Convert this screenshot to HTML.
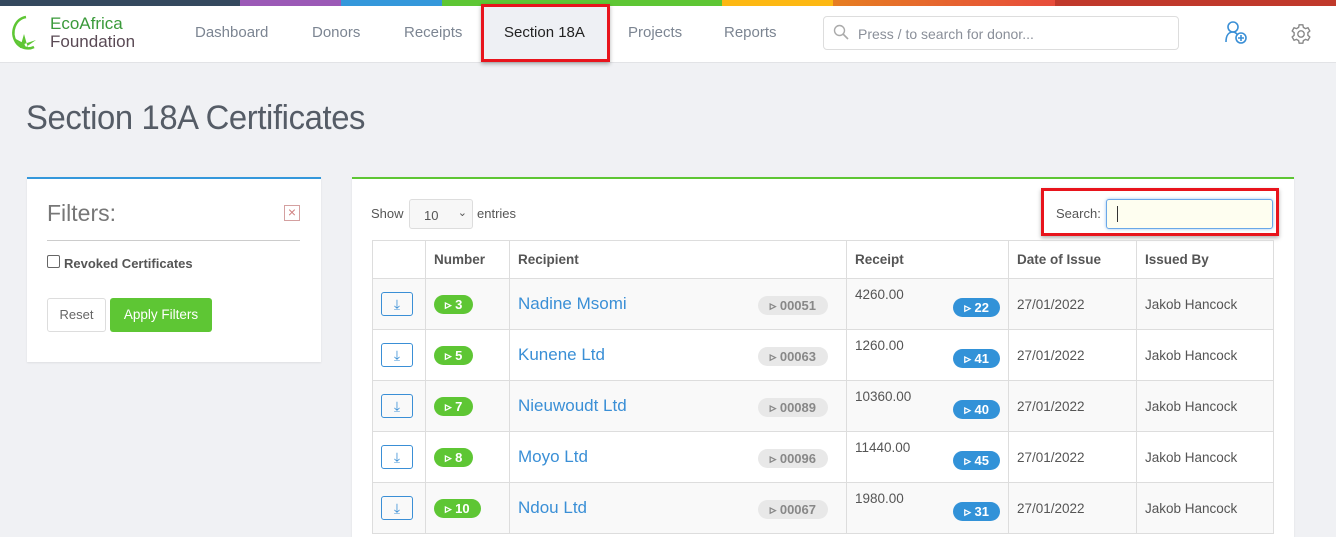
<!DOCTYPE html>
<html><head><meta charset="utf-8"><style>
*{box-sizing:border-box;margin:0;padding:0}
body{width:1336px;height:530px;overflow:hidden;background:#f0f1f4;font-family:"Liberation Sans",sans-serif;position:relative}
.stripe{position:absolute;top:0;height:6px}
.hdr{position:absolute;top:6px;left:0;width:1336px;height:57px;background:#fff;border-bottom:1px solid #e2e3e6}
.nav{position:absolute;top:24px;font-size:15px;color:#7c8592}
.abs{position:absolute}
.card{position:absolute;background:#fff;box-shadow:0 1px 2px rgba(0,0,0,.08)}
table{position:absolute;left:372px;top:240px;border-collapse:collapse;font-size:13.5px;color:#555}
td,th{border:1px solid #ddd;padding:0 8px;text-align:left;vertical-align:middle}
th{height:38px;font-weight:bold;color:#555}
td{height:51px}
tr.g td{background:#f9f9f9}
.pill{display:inline-block;border-radius:10px;color:#fff;font-weight:bold;font-size:13px;height:19px;line-height:19px;padding:0 11px}
.gr{background:#5ec634}.bl{background:#3292d8}.gy{background:#e8e8e8;color:#888;padding:0 12px}
.dl{display:inline-block;width:32px;height:24px;border:1px solid #3a8fd6;border-radius:3px;color:#3a8fd6;text-align:center;font-size:14px;line-height:22px}
.name{color:#3a8fd6;font-size:17px}
</style></head><body>
<div class="stripe" style="left:0;width:240px;background:#34495e"></div>
<div class="stripe" style="left:240px;width:101px;background:#9b59b6"></div>
<div class="stripe" style="left:341px;width:101px;background:#3498db"></div>
<div class="stripe" style="left:442px;width:280px;background:#5ec634"></div>
<div class="stripe" style="left:722px;width:111px;background:#fdb813"></div>
<div class="stripe" style="left:833px;width:222px;background:linear-gradient(90deg,#e67e22,#e74c3c)"></div>
<div class="stripe" style="left:1055px;width:281px;background:#c0392b"></div>
<div class="hdr"></div>
<svg class="abs" style="left:10px;top:14px" width="30" height="38" viewBox="0 0 30 38"><path d="M16 3 C5 5 0 18 6 28 C10 34 18 36 24 33" fill="none" stroke="#5ec634" stroke-width="2.5"/><path d="M10 34 L14 20 L18 34 Z M12 33 L4 24 L15 30 Z M16 33 L26 26 L14 30 Z" fill="#5ec634"/></svg>
<div class="abs" style="left:50px;top:15px;font-size:17px;color:#3a9a3a;line-height:18px">EcoAfrica</div>
<div class="abs" style="left:50px;top:33px;font-size:17px;color:#5a4a55;line-height:18px">Foundation</div>
<div class="nav" style="left:195px">Dashboard</div>
<div class="nav" style="left:312px">Donors</div>
<div class="nav" style="left:404px">Receipts</div>
<div class="abs" style="left:481px;top:4px;width:129px;height:58px;background:#eef0f4;border:3px solid #e8141c;box-shadow:0 2px 4px rgba(0,0,0,.3)"></div>
<div class="nav" style="left:504px;color:#222">Section 18A</div>
<div class="nav" style="left:628px">Projects</div>
<div class="nav" style="left:724px">Reports</div>
<div class="abs" style="left:823px;top:16px;width:356px;height:34px;border:1px solid #ddd;border-radius:4px;background:#fff"></div>
<svg class="abs" style="left:833px;top:24px" width="16" height="16"><circle cx="6.5" cy="6.5" r="5" fill="none" stroke="#aaa" stroke-width="1.4"/><path d="M10 10 L15 15" stroke="#aaa" stroke-width="1.6"/></svg>
<div class="abs" style="left:858px;top:26px;font-size:14px;color:#8a8f99">Press / to search for donor...</div>
<svg class="abs" style="left:1224px;top:20px" width="26" height="26" viewBox="0 0 26 26" fill="none" stroke="#3a8fd6" stroke-width="1.6"><circle cx="9" cy="7" r="5"/><path d="M2 22 C2 15 5 12 9 12 C11 12 12 13 13 14"/><circle cx="17" cy="18" r="5"/><path d="M17 15 V21 M14 18 H20"/></svg>
<svg class="abs" style="left:1290px;top:23px" width="22" height="22" viewBox="0 0 24 24" fill="none" stroke="#888" stroke-width="1.5"><circle cx="12" cy="12" r="3.5"/><path d="M10 2h4l.6 2.8 2.3 1.3 2.7-.9 2 3.5-2.1 1.9v2.8l2.1 1.9-2 3.5-2.7-.9-2.3 1.3L14 22h-4l-.6-2.8-2.3-1.3-2.7.9-2-3.5 2.1-1.9v-2.8L2.4 8.7l2-3.5 2.7.9 2.3-1.3z"/></svg>
<div class="abs" style="left:26px;top:99px;font-size:34px;color:#555c66;letter-spacing:-0.4px;transform:scaleX(0.965);transform-origin:left">Section 18A Certificates</div>
<div class="card" style="left:27px;top:177px;width:294px;height:185px;border-top:2px solid #3498db"></div>
<div class="abs" style="left:47px;top:200px;font-size:23px;color:#777">Filters:</div>
<div class="abs" style="left:284px;top:205px;width:16px;height:16px;border:1px solid #d4a0a0;color:#d08080;font-size:14px;line-height:13px;text-align:center">×</div>
<div class="abs" style="left:47px;top:240px;width:253px;height:1px;background:#ccc"></div>
<div class="abs" style="left:47px;top:255px;width:13px;height:13px;border:1px solid #666;border-radius:2px"></div>
<div class="abs" style="left:64px;top:256px;font-size:13px;font-weight:bold;color:#555">Revoked Certificates</div>
<div class="abs" style="left:47px;top:298px;width:59px;height:34px;border:1px solid #ddd;border-radius:3px;font-size:13px;color:#666;text-align:center;line-height:32px">Reset</div>
<div class="abs" style="left:110px;top:298px;width:102px;height:34px;background:#5ec634;border-radius:3px;font-size:13.5px;color:#fff;text-align:center;line-height:34px">Apply Filters</div>
<div class="card" style="left:352px;top:177px;width:942px;height:360px;border-top:2px solid #5ec634"></div>
<div class="abs" style="left:371px;top:206px;font-size:13px;color:#555">Show</div>
<div class="abs" style="left:409px;top:199px;width:64px;height:30px;border:1px solid #ddd;border-radius:3px;background:#f7f7f7;font-size:13px;color:#555;padding:8px 14px">10<span style="position:absolute;right:5px;top:6px;font-size:11px">&#8964;</span></div>
<div class="abs" style="left:477px;top:206px;font-size:13px;color:#555">entries</div>
<div class="abs" style="left:1041px;top:188px;width:238px;height:48px;border:3px solid #e8141c;box-shadow:0 2px 4px rgba(0,0,0,.3)"></div>
<div class="abs" style="left:1056px;top:206px;font-size:13px;color:#555">Search:</div>
<div class="abs" style="left:1106px;top:199px;width:167px;height:30px;border:1px solid #6aa8e8;border-radius:3px;background:#fefef0;box-shadow:0 0 3px #9cc4ee"><div style="position:absolute;left:10px;top:6px;width:1px;height:16px;background:#333"></div></div>
<table>
<tr><th style="width:53px"></th><th style="width:84px">Number</th><th style="width:337px">Recipient</th><th style="width:162px">Receipt</th><th style="width:128px">Date of Issue</th><th style="width:137px">Issued By</th></tr>
<tr class="g"><td><span class="dl">⤓</span></td><td><span class="pill gr">▹ 3</span></td><td><span class="name">Nadine Msomi</span><span class="pill gy" style="float:right;margin-top:2px;margin-right:10px">▹ 00051</span></td><td><span style="position:relative;top:-5px">4260.00</span><span class="pill bl" style="float:right;margin-top:6px">▹ 22</span></td><td>27/01/2022</td><td>Jakob Hancock</td></tr>
<tr><td><span class="dl">⤓</span></td><td><span class="pill gr">▹ 5</span></td><td><span class="name">Kunene Ltd</span><span class="pill gy" style="float:right;margin-top:2px;margin-right:10px">▹ 00063</span></td><td><span style="position:relative;top:-5px">1260.00</span><span class="pill bl" style="float:right;margin-top:6px">▹ 41</span></td><td>27/01/2022</td><td>Jakob Hancock</td></tr>
<tr class="g"><td><span class="dl">⤓</span></td><td><span class="pill gr">▹ 7</span></td><td><span class="name">Nieuwoudt Ltd</span><span class="pill gy" style="float:right;margin-top:2px;margin-right:10px">▹ 00089</span></td><td><span style="position:relative;top:-5px">10360.00</span><span class="pill bl" style="float:right;margin-top:6px">▹ 40</span></td><td>27/01/2022</td><td>Jakob Hancock</td></tr>
<tr><td><span class="dl">⤓</span></td><td><span class="pill gr">▹ 8</span></td><td><span class="name">Moyo Ltd</span><span class="pill gy" style="float:right;margin-top:2px;margin-right:10px">▹ 00096</span></td><td><span style="position:relative;top:-5px">11440.00</span><span class="pill bl" style="float:right;margin-top:6px">▹ 45</span></td><td>27/01/2022</td><td>Jakob Hancock</td></tr>
<tr class="g"><td><span class="dl">⤓</span></td><td><span class="pill gr">▹ 10</span></td><td><span class="name">Ndou Ltd</span><span class="pill gy" style="float:right;margin-top:2px;margin-right:10px">▹ 00067</span></td><td><span style="position:relative;top:-5px">1980.00</span><span class="pill bl" style="float:right;margin-top:6px">▹ 31</span></td><td>27/01/2022</td><td>Jakob Hancock</td></tr>
</table>
</body></html>
